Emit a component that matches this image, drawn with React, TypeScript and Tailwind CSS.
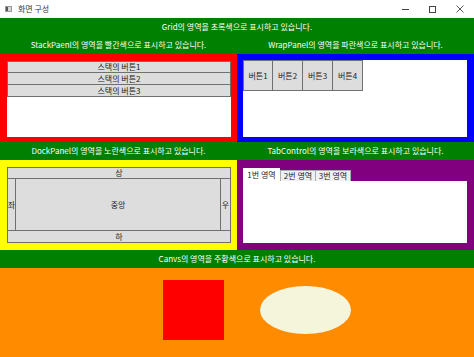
import React from 'react';

const font = { fontFamily: '"Noto Sans CJK KR", "Noto Sans", sans-serif' };

function Header({ children }: { children: React.ReactNode }) {
  return (
    <div className="h-[18px] flex items-center justify-center text-[8px] leading-none text-white bg-[#008000]">
      {children}
    </div>
  );
}

function Btn({ children, className = '' }: { children: React.ReactNode; className?: string }) {
  return (
    <div
      className={`flex items-center justify-center bg-[#dddddd] border border-[#707070] text-[8px] leading-none text-[#222] ${className}`}
    >
      {children}
    </div>
  );
}

export default function App() {
  return (
    <div className="w-[474px] h-[357px] flex flex-col bg-white overflow-hidden" style={font}>
      {/* title bar */}
      <div className="h-[18px] flex items-center bg-white">
        <div className="ml-[5px] w-[7px] h-[6px] border border-[#9a9a9a] bg-[#d8d8d8] flex">
          <div className="w-[2px] h-full bg-[#555]" />
        </div>
        <span className="ml-[6px] text-[8px] leading-none text-[#333]">화면 구성</span>
        <div className="ml-auto flex items-center h-full">
          <div className="w-[27px] flex justify-center">
            <div className="w-[7px] h-px bg-[#444]" />
          </div>
          <div className="w-[27px] flex justify-center">
            <div className="w-[7px] h-[7px] border border-[#444]" />
          </div>
          <div className="w-[28px] flex justify-center">
            <svg width="8" height="8" viewBox="0 0 8 8">
              <path d="M0.5 0.5 L7.5 7.5 M7.5 0.5 L0.5 7.5" stroke="#444" strokeWidth="0.9" />
            </svg>
          </div>
        </div>
      </div>

      <Header>Grid의 영역을 초록색으로 표시하고 있습니다.</Header>

      {/* row 1 */}
      <div className="grid grid-cols-[237px_237px]">
        <Header>StackPaenl의 영역을 빨간색으로 표시하고 있습니다.</Header>
        <Header>WrapPanel의 영역을 파란색으로 표시하고 있습니다.</Header>
        <div className="h-[88px] bg-[#ff0000] pl-[7px] pr-[6px] pt-[7px] pb-[5px]">
          <div className="h-full bg-white flex flex-col">
            <Btn className="h-[12px]">스택의 버튼1</Btn>
            <Btn className="h-[12px] border-t-0">스택의 버튼2</Btn>
            <Btn className="h-[12px] border-t-0">스택의 버튼3</Btn>
          </div>
        </div>
        <div className="h-[88px] bg-[#0000ff] pl-[6px] pr-[7px] pt-[6px] pb-[5px]">
          <div className="h-full bg-white flex items-start">
            <Btn className="w-[30px] h-[31px]">버튼1</Btn>
            <Btn className="w-[30px] h-[31px] border-l-0">버튼2</Btn>
            <Btn className="w-[30px] h-[31px] border-l-0">버튼3</Btn>
            <Btn className="w-[30px] h-[31px] border-l-0">버튼4</Btn>
          </div>
        </div>
      </div>

      {/* row 2 */}
      <div className="grid grid-cols-[237px_237px]">
        <Header>DockPanel의 영역을 노란색으로 표시하고 있습니다.</Header>
        <Header>TabControl의 영역을 보라색으로 표시하고 있습니다.</Header>
        <div className="h-[90px] bg-[#ffff00] pl-[7px] pr-[6px] pt-[7px] pb-[7px]">
          <div className="h-full flex flex-col">
            <Btn className="h-[12px]">상</Btn>
            <div className="flex-1 flex">
              <Btn className="w-[9px] border-t-0">좌</Btn>
              <Btn className="flex-1 border-t-0 border-l-0">중앙</Btn>
              <Btn className="w-[10px] border-t-0 border-l-0">우</Btn>
            </div>
            <Btn className="h-[12px] border-t-0">하</Btn>
          </div>
        </div>
        <div className="h-[90px] bg-[#800080] pl-[6px] pr-[7px] pt-[8px] pb-[7px] flex flex-col">
          <div className="flex items-end h-[13px]">
            <div className="w-[37px] h-[13px] bg-white flex items-center justify-center text-[8px] leading-none text-[#222]">
              1번 영역
            </div>
            <div className="w-[36px] h-[11px] bg-[#f0f0f0] border border-b-0 border-[#acacac] flex items-center justify-center text-[8px] leading-none text-[#222]">
              2번 영역
            </div>
            <div className="w-[35px] h-[11px] bg-[#f0f0f0] border border-b-0 border-l-0 border-[#acacac] flex items-center justify-center text-[8px] leading-none text-[#222]">
              3번 영역
            </div>
          </div>
          <div className="flex-1 bg-white" />
        </div>
      </div>

      <Header>Canvs의 영역을 주황색으로 표시하고 있습니다.</Header>

      {/* canvas */}
      <div className="relative flex-1 bg-[#ff8c00]">
        <div className="absolute left-[163px] top-[12px] w-[61px] h-[60px] bg-[#ff0000]" />
        <div className="absolute left-[260px] top-[18px] w-[91px] h-[48px] rounded-[50%] bg-[#f5f5dc]" />
      </div>
    </div>
  );
}
